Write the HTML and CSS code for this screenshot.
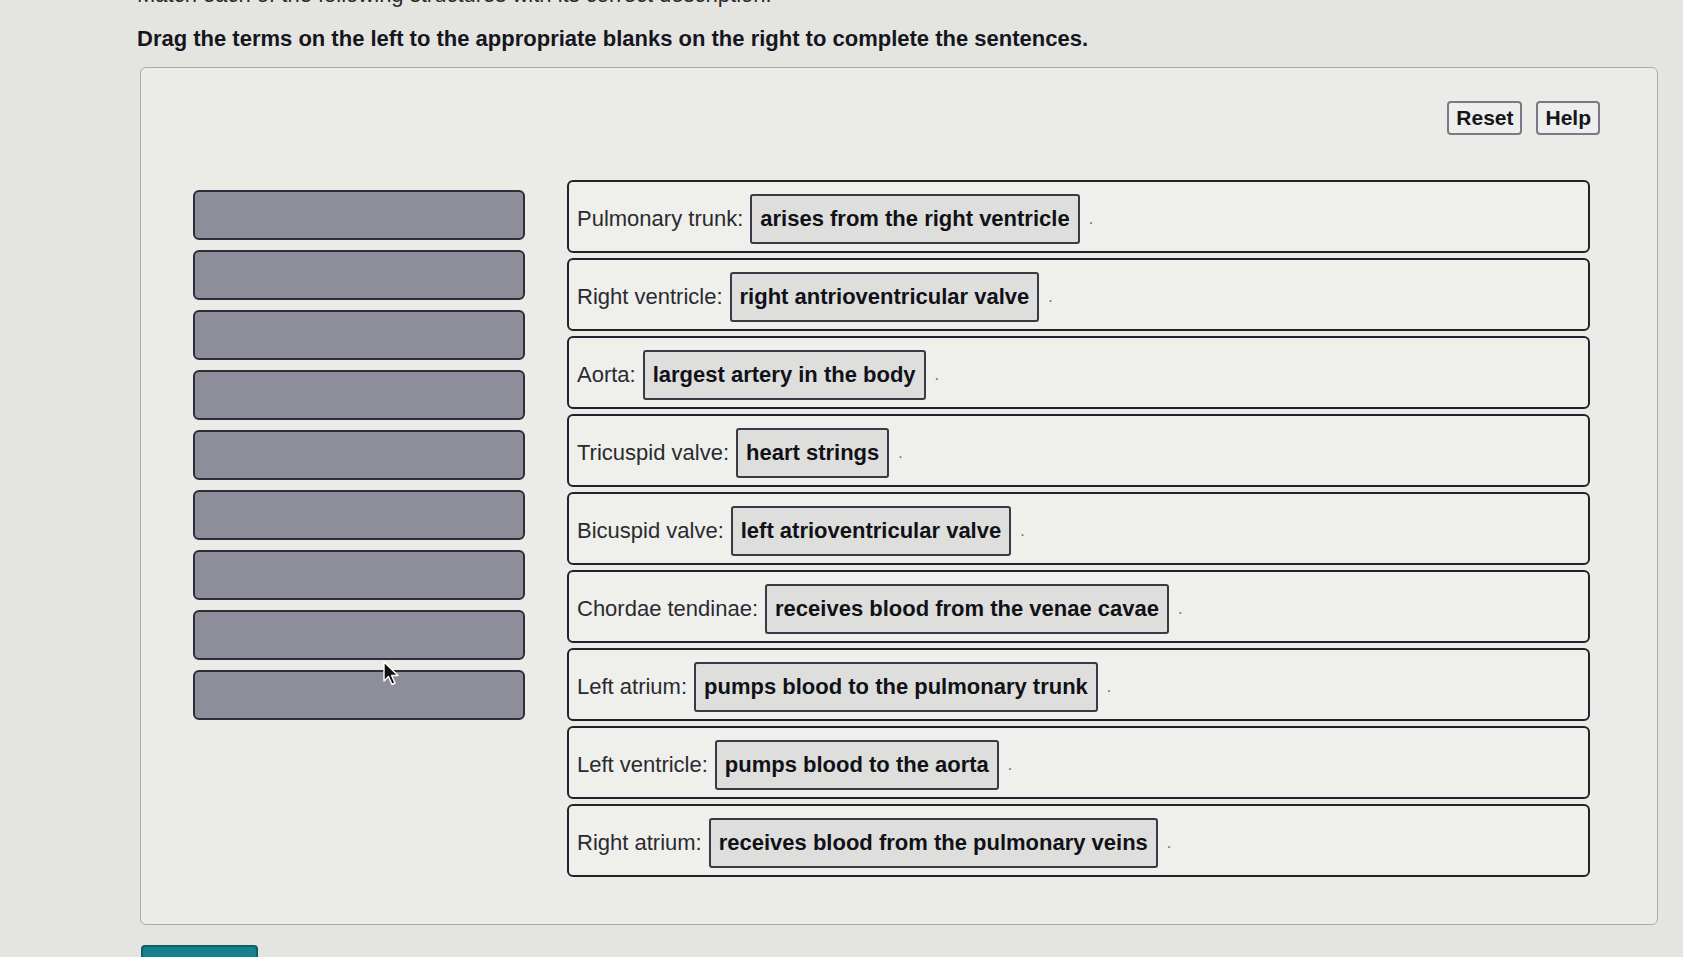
FILE: index.html
```html
<!DOCTYPE html>
<html>
<head>
<meta charset="utf-8">
<link rel="stylesheet" href="styles.css">
</head>
<body>
<div class="page">
  <p class="intro">Match each of the following structures with its correct description.</p>
  <p class="heading">Drag the terms on the left to the appropriate blanks on the right to complete the sentences.</p>
  <div class="panel">
    <div class="toolbar">
      <button class="btn">Reset</button>
      <button class="btn">Help</button>
    </div>
    <div class="main">
      <div class="slots">
        <div class="slot"></div>
        <div class="slot"></div>
        <div class="slot"></div>
        <div class="slot"></div>
        <div class="slot"></div>
        <div class="slot"></div>
        <div class="slot"></div>
        <div class="slot"></div>
        <div class="slot"></div>
        <svg class="cursor" width="18" height="26" viewBox="0 0 18 26"><path d="M1 1 L1 20 L5.5 15.5 L9 23.5 L12 22 L8.6 14.5 L15 14.5 Z" fill="#111" stroke="#fff" stroke-width="1.4" stroke-linejoin="round"/></svg>
      </div>
      <div class="rows">
        <div class="row"><span class="label">Pulmonary trunk:</span><span class="ans">arises from the right ventricle</span><span class="dot">.</span></div>
        <div class="row"><span class="label">Right ventricle:</span><span class="ans">right antrioventricular valve</span><span class="dot">.</span></div>
        <div class="row"><span class="label">Aorta:</span><span class="ans">largest artery in the body</span><span class="dot">.</span></div>
        <div class="row"><span class="label">Tricuspid valve:</span><span class="ans">heart strings</span><span class="dot">.</span></div>
        <div class="row"><span class="label">Bicuspid valve:</span><span class="ans">left atrioventricular valve</span><span class="dot">.</span></div>
        <div class="row"><span class="label">Chordae tendinae:</span><span class="ans">receives blood from the venae cavae</span><span class="dot">.</span></div>
        <div class="row"><span class="label">Left atrium:</span><span class="ans">pumps blood to the pulmonary trunk</span><span class="dot">.</span></div>
        <div class="row"><span class="label">Left ventricle:</span><span class="ans">pumps blood to the aorta</span><span class="dot">.</span></div>
        <div class="row"><span class="label">Right atrium:</span><span class="ans">receives blood from the pulmonary veins</span><span class="dot">.</span></div>
      </div>
    </div>
  </div>
  <button class="submit" aria-label="Submit"></button>
</div>
</body>
</html>
```
FILE: styles.css
```css
html, body {
  margin: 0;
  padding: 0;
  height: 100%;
  overflow: hidden;
}
body {
  background: #e4e4e1;
  font-family: "Liberation Sans", Arial, sans-serif;
  color: #1c1c24;
}
.page {
  padding-left: 137px;
}
.intro {
  margin: -17px 0 0 0;
  font-size: 22px;
  line-height: 24px;
  color: #2a2a2a;
}
.heading {
  margin: 19px 0 0 0;
  font-size: 22px;
  font-weight: bold;
  line-height: 26px;
  color: #16161e;
}
.panel {
  margin: 15px 0 0 3px;
  width: 1518px;
  height: 858px;
  box-sizing: border-box;
  background: #ebebe8;
  border: 1px solid #a9a9ae;
  border-radius: 6px;
  padding: 33px 57px 0 52px;
}
.toolbar {
  display: flex;
  justify-content: flex-end;
  gap: 14px;
  height: 34px;
}
.btn {
  font-family: "Liberation Sans", Arial, sans-serif;
  font-weight: bold;
  font-size: 21px;
  color: #15151c;
  background: #eeeeec;
  border: 2px solid #787a88;
  border-radius: 4px;
  padding: 0 7px;
  height: 34px;
}
.main {
  display: flex;
  gap: 42px;
  margin-top: 45px;
}
.slots {
  position: relative;
  width: 332px;
  margin-top: 10px;
  display: flex;
  flex-direction: column;
  gap: 10px;
}
.slot {
  height: 50px;
  box-sizing: border-box;
  background: #8d8e9a;
  border: 2px solid #2e2e3a;
  border-radius: 6px;
}
.cursor {
  position: absolute;
  left: 190px;
  top: 471px;
}
.rows {
  width: 1023px;
  display: flex;
  flex-direction: column;
  gap: 5px;
}
.row {
  height: 73px;
  box-sizing: border-box;
  border: 2px solid #22222e;
  border-radius: 6px;
  background: #efefec;
  display: flex;
  align-items: center;
  padding: 4px 0 0 8px;
}
.label {
  font-size: 22px;
  color: #2a2a30;
  margin-right: 7px;
}
.ans {
  font-size: 22px;
  font-weight: bold;
  color: #111118;
  background: #dededc;
  border: 2px solid #3a3a46;
  border-radius: 3px;
  padding: 0 8px;
  height: 50px;
  box-sizing: border-box;
  display: flex;
  align-items: center;
}
.dot {
  font-size: 16px;
  color: #6c6c72;
  margin-left: 9px;
}
.submit {
  display: block;
  margin: 20px 0 0 4px;
  width: 117px;
  height: 40px;
  background: #17818b;
  border: 2px solid #0e5f68;
  border-radius: 4px;
}
```
